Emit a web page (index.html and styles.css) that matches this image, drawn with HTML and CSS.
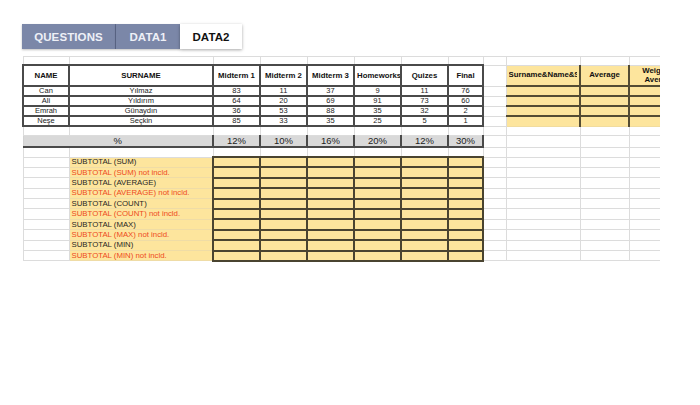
FILE: index.html
```html
<!DOCTYPE html>
<html>
<head>
<meta charset="utf-8">
<link rel="stylesheet" href="styles.css">
</head>
<body>
<div class="tabs">
  <div class="tab tab-q">QUESTIONS</div>
  <div class="tab tab-d1">DATA1</div>
  <div class="tab tab-active">DATA2</div>
</div>
<div class="sheet">
<table class="grid">
  <colgroup>
    <col style="width:46px"><col style="width:144px"><col style="width:47px"><col style="width:47px"><col style="width:47px"><col style="width:47px"><col style="width:47px"><col style="width:35px"><col style="width:23px"><col style="width:74px"><col style="width:49px"><col style="width:61px">
  </colgroup>
  <tr class="r-top"><td></td><td></td><td></td><td></td><td></td><td></td><td></td><td></td><td></td><td></td><td></td><td></td></tr>
  <tr class="r-head">
    <td class="d hd">NAME</td><td class="d hd">SURNAME</td><td class="d hd">Midterm 1</td><td class="d hd">Midterm 2</td><td class="d hd">Midterm 3</td><td class="d hd">Homeworks</td><td class="d hd">Quizes</td><td class="d hd">Final</td>
    <td></td>
    <td class="y yh hd left"><div class="clip">Surname&amp;Name&amp;S</div></td><td class="y yh yv hd">Average</td><td class="y yh yv hd wrap">Weighted Average</td>
  </tr>
  <tr class="r-data">
    <td class="d">Can</td><td class="d">Yılmaz</td><td class="d">83</td><td class="d">11</td><td class="d">37</td><td class="d">9</td><td class="d">11</td><td class="d">76</td>
    <td></td><td class="y yh"></td><td class="y yh yv"></td><td class="y yh yv"></td>
  </tr>
  <tr class="r-data">
    <td class="d">Ali</td><td class="d">Yıldırım</td><td class="d">64</td><td class="d">20</td><td class="d">69</td><td class="d">91</td><td class="d">73</td><td class="d">60</td>
    <td></td><td class="y yh"></td><td class="y yh yv"></td><td class="y yh yv"></td>
  </tr>
  <tr class="r-data">
    <td class="d">Emrah</td><td class="d">Günaydın</td><td class="d">36</td><td class="d">53</td><td class="d">88</td><td class="d">35</td><td class="d">32</td><td class="d">2</td>
    <td></td><td class="y yh"></td><td class="y yh yv"></td><td class="y yh yv"></td>
  </tr>
  <tr class="r-data">
    <td class="d">Neşe</td><td class="d">Seçkin</td><td class="d">85</td><td class="d">33</td><td class="d">35</td><td class="d">25</td><td class="d">5</td><td class="d">1</td>
    <td></td><td class="y"></td><td class="y yv"></td><td class="y yv"></td>
  </tr>
  <tr class="r-data"><td></td><td></td><td></td><td></td><td></td><td></td><td></td><td></td><td></td><td></td><td></td><td></td></tr>
  <tr class="r-pct">
    <td class="p pb p-joinr"></td><td class="p pb p-joinl pct-label">%</td><td class="p pb pv">12%</td><td class="p pb pv">10%</td><td class="p pb pv">16%</td><td class="p pb pv">20%</td><td class="p pb pv">12%</td><td class="p pb pv pr">30%</td>
    <td></td><td></td><td></td><td></td>
  </tr>
  <tr class="r-data"><td></td><td></td><td></td><td></td><td></td><td></td><td></td><td></td><td></td><td></td><td></td><td></td></tr>
  <tr class="r-sub">
    <td></td><td class="lbl">SUBTOTAL (SUM)</td><td class="s"></td><td class="s"></td><td class="s"></td><td class="s"></td><td class="s"></td><td class="s"></td>
    <td></td><td></td><td></td><td></td>
  </tr>
  <tr class="r-sub">
    <td></td><td class="lbl red">SUBTOTAL (SUM) not incld.</td><td class="s"></td><td class="s"></td><td class="s"></td><td class="s"></td><td class="s"></td><td class="s"></td>
    <td></td><td></td><td></td><td></td>
  </tr>
  <tr class="r-sub">
    <td></td><td class="lbl">SUBTOTAL (AVERAGE)</td><td class="s"></td><td class="s"></td><td class="s"></td><td class="s"></td><td class="s"></td><td class="s"></td>
    <td></td><td></td><td></td><td></td>
  </tr>
  <tr class="r-sub">
    <td></td><td class="lbl red">SUBTOTAL (AVERAGE) not incld.</td><td class="s"></td><td class="s"></td><td class="s"></td><td class="s"></td><td class="s"></td><td class="s"></td>
    <td></td><td></td><td></td><td></td>
  </tr>
  <tr class="r-sub">
    <td></td><td class="lbl">SUBTOTAL (COUNT)</td><td class="s"></td><td class="s"></td><td class="s"></td><td class="s"></td><td class="s"></td><td class="s"></td>
    <td></td><td></td><td></td><td></td>
  </tr>
  <tr class="r-sub">
    <td></td><td class="lbl red">SUBTOTAL (COUNT) not incld.</td><td class="s"></td><td class="s"></td><td class="s"></td><td class="s"></td><td class="s"></td><td class="s"></td>
    <td></td><td></td><td></td><td></td>
  </tr>
  <tr class="r-sub">
    <td></td><td class="lbl">SUBTOTAL (MAX)</td><td class="s"></td><td class="s"></td><td class="s"></td><td class="s"></td><td class="s"></td><td class="s"></td>
    <td></td><td></td><td></td><td></td>
  </tr>
  <tr class="r-sub">
    <td></td><td class="lbl red">SUBTOTAL (MAX) not incld.</td><td class="s"></td><td class="s"></td><td class="s"></td><td class="s"></td><td class="s"></td><td class="s"></td>
    <td></td><td></td><td></td><td></td>
  </tr>
  <tr class="r-sub">
    <td></td><td class="lbl">SUBTOTAL (MIN)</td><td class="s"></td><td class="s"></td><td class="s"></td><td class="s"></td><td class="s"></td><td class="s"></td>
    <td></td><td></td><td></td><td></td>
  </tr>
  <tr class="r-sub">
    <td></td><td class="lbl red">SUBTOTAL (MIN) not incld.</td><td class="s"></td><td class="s"></td><td class="s"></td><td class="s"></td><td class="s"></td><td class="s"></td>
    <td></td><td></td><td></td><td></td>
  </tr>
</table>
</div>
</body>
</html>
```

FILE: styles.css
```css
html, body {
  margin: 0;
  padding: 0;
  background: #ffffff;
  font-family: "Liberation Sans", Arial, sans-serif;
}

.tabs {
  display: flex;
  margin: 24px 0 0 22px;
  height: 25px;
}

.tab {
  display: flex;
  align-items: center;
  justify-content: center;
  font-weight: bold;
  font-size: 11.5px;
  letter-spacing: 0.1px;
  height: 25px;
  box-sizing: border-box;
}

.tab-q {
  width: 94px;
  background: #7b87a8;
  color: #eef0f7;
  border-right: 1px solid #5f6b8d;
  box-shadow: 0 1px 2px rgba(0, 0, 0, 0.25);
}

.tab-d1 {
  width: 64px;
  background: #7b87a8;
  color: #eef0f7;
  box-shadow: 0 1px 2px rgba(0, 0, 0, 0.25);
}

.tab-active {
  width: 62px;
  background: #ffffff;
  color: #111111;
  box-shadow: 0 1px 3px rgba(0, 0, 0, 0.35);
}

.sheet {
  margin: 7px 0 0 22px;
  width: 638px;
  overflow: hidden;
}

.grid {
  table-layout: fixed;
  border-collapse: collapse;
  width: 667px;
  color: #222222;
}

.grid td {
  border: 1px solid #dcdcdc;
  padding: 0 2px;
  font-size: 7.5px;
  line-height: 8px;
  text-align: center;
  white-space: nowrap;
  overflow: hidden;
}

.r-top td { height: 7px; }
.r-head td { height: 19px; }
.r-data td { height: 8px; }
.r-pct td { height: 10px; }
.r-sub td { height: 8.4px; }

.grid td.d {
  border: 2px solid #4a4a4a;
}

.grid td.hd {
  font-weight: bold;
  font-size: 7.8px;
  color: #111111;
}

.grid td.left {
  text-align: left;
}

.clip {
  max-width: 70px;
  overflow: hidden;
  white-space: nowrap;
}

.grid td.wrap {
  white-space: normal;
  line-height: 9px;
}

.grid td.y {
  background: #fde59d;
  border-color: #f1dc9e;
}

.grid td.yh {
  border-bottom: 2px solid #544c33;
}

.grid td.yv {
  border-left: 2px solid #544c33;
}

.grid td.p {
  background: #d9d9d9;
  font-size: 9.5px;
  line-height: 10px;
  border-color: #d2d2d2;
}

.grid td.p-joinr {
  border-right-color: #d9d9d9;
}

.grid td.p-joinl {
  border-left-color: #d9d9d9;
}

.grid td.pct-label {
  text-align: left;
  padding-left: 44px;
}

.grid td.pb {
  border-bottom: 2px solid #4a4a4a;
}

.grid td.pv {
  border-left: 2px solid #4a4a4a;
}

.grid td.pr {
  border-right: 2px solid #4a4a4a;
}

.grid td.lbl {
  background: #fde59d;
  border-color: #efdca6;
  text-align: left;
  color: #1f1f1f;
  font-size: 7.8px;
}

.grid td.red {
  color: #ee4a1c;
}

.grid td.s {
  background: #fde59d;
  border: 2px solid #4a4430;
}
```
